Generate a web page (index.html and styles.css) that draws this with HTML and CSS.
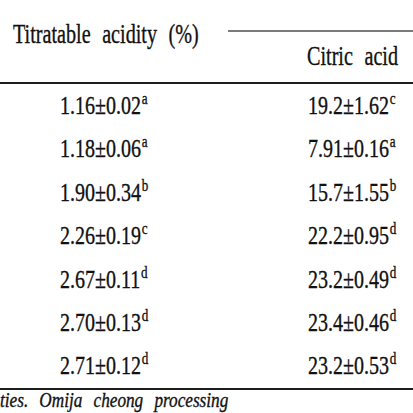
FILE: index.html
```html
<!DOCTYPE html>
<html>
<head>
  <link rel="stylesheet" href="styles.css">
</head>
<body>
  <div class="sheet">
    <div class="head">
      <div class="head-top">
        <div class="head-cell"><span class="txt">Titratable acidity (%)</span></div>
        <div class="group-rule"></div>
      </div>
      <div class="head-sub">
        <div class="head-cell"></div>
        <div class="head-cell"><span class="txt">Citric acid</span></div>
      </div>
    </div>

    <div class="rows">
      <div class="row">
        <div class="cell"><span class="txt">1.16±0.02<sup>a</sup></span></div>
        <div class="cell"><span class="txt">19.2±1.62<sup>c</sup></span></div>
      </div>
      <div class="row">
        <div class="cell"><span class="txt">1.18±0.06<sup>a</sup></span></div>
        <div class="cell"><span class="txt">7.91±0.16<sup>a</sup></span></div>
      </div>
      <div class="row">
        <div class="cell"><span class="txt">1.90±0.34<sup>b</sup></span></div>
        <div class="cell"><span class="txt">15.7±1.55<sup>b</sup></span></div>
      </div>
      <div class="row">
        <div class="cell"><span class="txt">2.26±0.19<sup>c</sup></span></div>
        <div class="cell"><span class="txt">22.2±0.95<sup>d</sup></span></div>
      </div>
      <div class="row">
        <div class="cell"><span class="txt">2.67±0.11<sup>d</sup></span></div>
        <div class="cell"><span class="txt">23.2±0.49<sup>d</sup></span></div>
      </div>
      <div class="row">
        <div class="cell"><span class="txt">2.70±0.13<sup>d</sup></span></div>
        <div class="cell"><span class="txt">23.4±0.46<sup>d</sup></span></div>
      </div>
      <div class="row">
        <div class="cell"><span class="txt">2.71±0.12<sup>d</sup></span></div>
        <div class="cell"><span class="txt">23.2±0.53<sup>d</sup></span></div>
      </div>
    </div>

    <p class="note"><span class="txt">ties. Omija cheong processing</span></p>
  </div>
</body>
</html>
```

FILE: styles.css
```css
body {
  margin: 0;
  background: #fff;
  overflow: hidden;
}

.sheet {
  width: 413px;
  height: 413px;
  overflow: hidden;
  font-family: 'Liberation Serif', 'Times New Roman', serif;
  color: #111;
  -webkit-text-stroke: 0.35px #111;
}

.txt {
  display: inline-block;
  white-space: nowrap;
  transform: scaleX(0.72);
  transform-origin: left center;
}

/* header */
.head {
  padding: 23px 0 15px;
  border-bottom: 2px solid #1e1e1e;
}

.head-top,
.head-sub {
  display: grid;
  grid-template-columns: 228px 1fr;
}

.head-cell {
  font-size: 28px;
  line-height: 22px;
  white-space: nowrap;
  word-spacing: 9px;
}

.head-top .head-cell {
  padding-left: 13px;
}

.head-sub .head-cell:last-child {
  padding-left: 79px;
}

.group-rule {
  align-self: start;
  margin-top: 7px;
  height: 2px;
  background: #7b7b7b;
}

/* body */
.rows {
  border-bottom: 2px solid #1e1e1e;
}

.row {
  display: grid;
  grid-template-columns: 248px 1fr;
  padding-left: 60px;
  height: 43.4px;
  line-height: 43.4px;
  font-size: 26px;
}

.row .txt {
  transform: scaleX(0.77);
}

.row sup {
  font-size: 17px;
  line-height: 0;
  vertical-align: 10px;
  margin-left: 1px;
}

.note {
  margin: 0;
  font-size: 20px;
  line-height: 20px;
  font-style: italic;
  word-spacing: 8px;
  white-space: nowrap;
}

.note .txt {
  transform: scaleX(0.86);
}
```
